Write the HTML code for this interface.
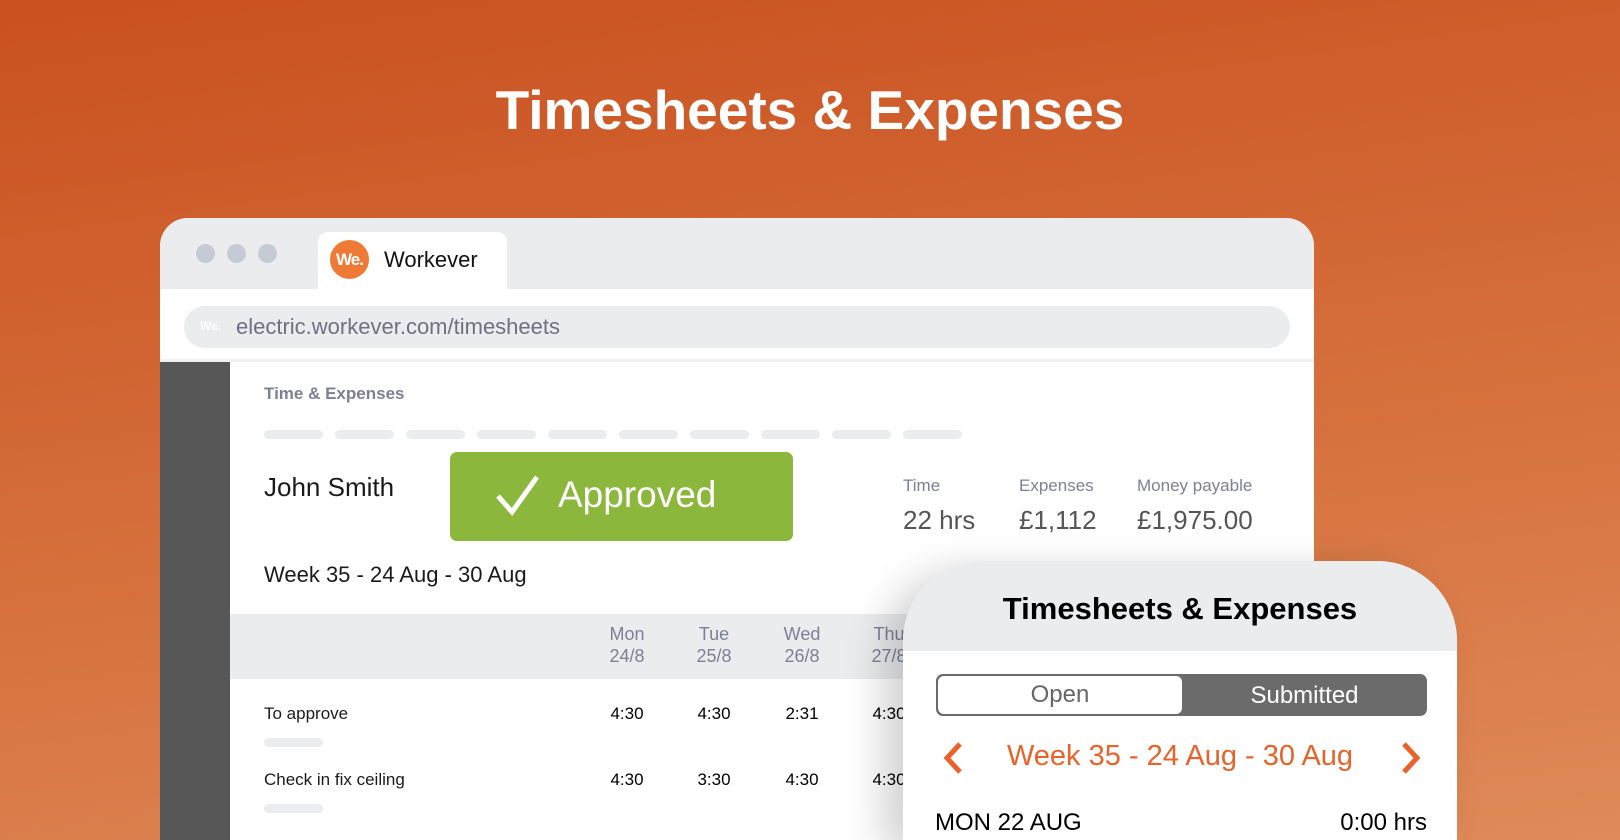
<!DOCTYPE html>
<html><head><meta charset="utf-8"><style>
*{margin:0;padding:0;box-sizing:border-box}
html{width:1620px;height:840px;overflow:hidden;background:#df8a59}
body{width:1620px;height:840px;overflow:hidden;position:relative;font-family:"Liberation Sans",sans-serif;background:linear-gradient(172deg,#c9511f 0%,#d36a37 45%,#df8a59 100%)}
.a{position:absolute}
.h1{left:0;width:1620px;top:78px;text-align:center;color:#fff;font-size:55px;font-weight:bold}
.win{left:160px;top:218px;width:1154px;height:622px;background:#fff;border-radius:28px 28px 0 0;overflow:hidden}
.bar{left:0;top:0;width:1154px;height:71px;background:#ebecee}
.dot{width:19px;height:19px;border-radius:50%;background:#c5cbd4;top:26px}
.tab{left:158px;top:14px;width:189px;height:57px;background:#fff;border-radius:10px 10px 0 0}
.logo{width:39px;height:39px;border-radius:50%;background:#ef7a35;color:#fff;font-size:17px;font-weight:bold;text-align:center;line-height:39px;letter-spacing:-1px}
.url{left:24px;top:88px;width:1106px;height:42px;border-radius:21px;background:#ebecee}
.side{left:0;top:144px;width:70px;height:478px;background:#575757}
.g{color:#7c8094}
.pb{height:9px;width:59px;border-radius:5px;background:#ebecee;top:212px}
.c{text-align:center;width:60px}
.phone{left:903px;top:561px;width:554px;height:279px;background:#fff;border-radius:80px 80px 0 0;overflow:hidden;box-shadow:-20px 10px 40px rgba(0,0,0,.18)}
</style></head><body>
<div class="a h1">Timesheets &amp; Expenses</div>
<div class="a win">
 <div class="a bar"></div>
 <div class="a dot" style="left:36px"></div><div class="a dot" style="left:67px"></div><div class="a dot" style="left:98px"></div>
 <div class="a tab"><div class="a logo" style="left:12px;top:8px">We.</div><div class="a" style="left:66px;top:15px;font-size:22px;color:#111">Workever</div></div>
 <div class="a" style="left:0;top:71px;width:1154px;height:73px;background:#fff;border-bottom:3px solid #f0f1f3"></div>
 <div class="a url"><div class="a" style="left:16px;top:13px;font-size:12px;color:#fff;font-weight:bold">We.</div><div class="a" style="left:52px;top:8px;font-size:22px;color:#6d7182">electric.workever.com/timesheets</div></div>
 <div class="a side"></div>
 <div class="a g" style="left:104px;top:166px;font-size:17px;font-weight:bold">Time &amp; Expenses</div>
 <div class="a pb" style="left:104px"></div><div class="a pb" style="left:175px"></div><div class="a pb" style="left:246px"></div><div class="a pb" style="left:317px"></div><div class="a pb" style="left:388px"></div><div class="a pb" style="left:459px"></div><div class="a pb" style="left:530px"></div><div class="a pb" style="left:601px"></div><div class="a pb" style="left:672px"></div><div class="a pb" style="left:743px"></div>
 <div class="a" style="left:104px;top:254px;font-size:26px;color:#1a1a1a">John Smith</div>
 <div class="a" style="left:290px;top:234px;width:343px;height:89px;background:#8bb73c;border-radius:7px">
  <svg class="a" style="left:45px;top:22px" width="46" height="42" viewBox="0 0 46 42"><path d="M3 22 L17 38 L42 3" fill="none" stroke="#fff" stroke-width="5"/></svg>
  <div class="a" style="left:108px;top:22px;font-size:37px;color:#fff">Approved</div>
 </div>
 <div class="a g" style="left:743px;top:258px;font-size:17px">Time</div>
 <div class="a g" style="left:859px;top:258px;font-size:17px">Expenses</div>
 <div class="a g" style="left:977px;top:258px;font-size:17px">Money payable</div>
 <div class="a" style="left:743px;top:287px;font-size:26px;color:#555">22 hrs</div>
 <div class="a" style="left:859px;top:287px;font-size:26px;color:#555">£1,112</div>
 <div class="a" style="left:977px;top:287px;font-size:26px;color:#555">£1,975.00</div>
 <div class="a" style="left:104px;top:344px;font-size:22px;color:#1a1a1a">Week 35 - 24 Aug - 30 Aug</div>
 <div class="a" style="left:70px;top:396px;width:1084px;height:65px;background:#ebecee"></div>
 <div class="a g c" style="left:437px;top:405px;font-size:18px;line-height:22px">Mon<br>24/8</div>
 <div class="a g c" style="left:524px;top:405px;font-size:18px;line-height:22px">Tue<br>25/8</div>
 <div class="a g c" style="left:612px;top:405px;font-size:18px;line-height:22px">Wed<br>26/8</div>
 <div class="a g c" style="left:699px;top:405px;font-size:18px;line-height:22px">Thu<br>27/8</div>
 <div class="a" style="left:104px;top:486px;font-size:17px;color:#1a1a1a">To approve</div>
 <div class="a" style="left:104px;top:520px;width:59px;height:9px;border-radius:5px;background:#ebecee"></div>
 <div class="a" style="left:104px;top:552px;font-size:17px;color:#1a1a1a">Check in fix ceiling</div>
 <div class="a" style="left:104px;top:586px;width:59px;height:9px;border-radius:5px;background:#ebecee"></div>
 <div class="a c" style="left:437px;top:486px;font-size:17px">4:30</div><div class="a c" style="left:524px;top:486px;font-size:17px">4:30</div><div class="a c" style="left:612px;top:486px;font-size:17px">2:31</div><div class="a c" style="left:699px;top:486px;font-size:17px">4:30</div>
 <div class="a c" style="left:437px;top:552px;font-size:17px">4:30</div><div class="a c" style="left:524px;top:552px;font-size:17px">3:30</div><div class="a c" style="left:612px;top:552px;font-size:17px">4:30</div><div class="a c" style="left:699px;top:552px;font-size:17px">4:30</div>
</div>
<div class="a phone">
 <div class="a" style="left:0;top:0;width:554px;height:90px;background:#ebecee"></div>
 <div class="a" style="left:0;top:30px;width:554px;text-align:center;font-size:31px;font-weight:bold;color:#000">Timesheets &amp; Expenses</div>
 <div class="a" style="left:33px;top:113px;width:491px;height:42px;border-radius:7px;background:#6b6b6b"></div>
 <div class="a" style="left:35px;top:115px;width:244px;height:38px;border-radius:6px;background:#fff;text-align:center;font-size:24px;line-height:38px;color:#666">Open</div>
 <div class="a" style="left:279px;top:115px;width:245px;height:38px;text-align:center;font-size:24px;line-height:40px;color:#fff">Submitted</div>
 <svg class="a" style="left:38px;top:180px" width="24" height="34" viewBox="0 0 24 34"><path d="M19 3 L6 17 L19 31" fill="none" stroke="#e8622a" stroke-width="5"/></svg>
 <svg class="a" style="left:496px;top:180px" width="24" height="34" viewBox="0 0 24 34"><path d="M5 3 L18 17 L5 31" fill="none" stroke="#e8622a" stroke-width="5"/></svg>
 <div class="a" style="left:0;top:179px;width:554px;text-align:center;font-size:29px;color:#e8622a">Week 35 - 24 Aug - 30 Aug</div>
 <div class="a" style="left:32px;top:248px;font-size:24px;color:#000">MON 22 AUG</div>
 <div class="a" style="right:30px;top:248px;font-size:24px;color:#000">0:00 hrs</div>
</div>
</body></html>
